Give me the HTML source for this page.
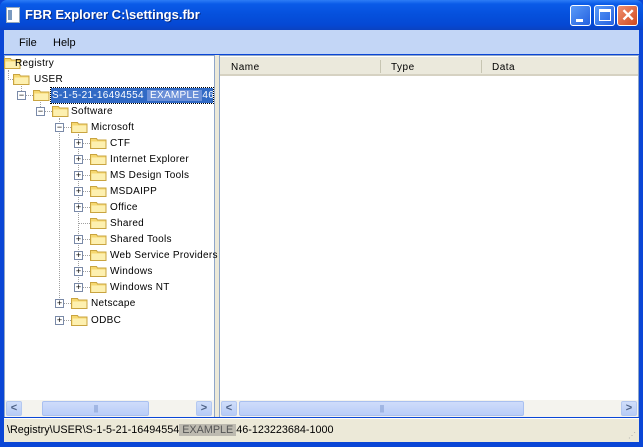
<!DOCTYPE html>
<html><head><meta charset="utf-8"><style>
*{margin:0;padding:0;box-sizing:border-box}
body{width:643px;height:447px;overflow:hidden;background:#0a46d6;font-family:"Liberation Sans",sans-serif;position:relative}
.a{position:absolute}
#title{left:0;top:0;width:643px;height:30px;background:linear-gradient(#2d7df6 0,#0a5be8 4px,#0550dc 15px,#0548d4 25px,#0a42c0 30px);border-radius:7px 7px 0 0}
#title .t{left:25px;top:7px;color:#fff;font-weight:bold;font-size:13px;letter-spacing:0;text-shadow:1px 1px #0a2a80}
.btn{top:5px;width:21px;height:21px;border:1px solid #fff;border-radius:3px;background:linear-gradient(135deg,#5a9af8,#2461e0)}
#menu{left:4px;top:30px;width:635px;height:24px;background:#c3d6f6;font-size:11px}
#menu span{position:absolute;top:7px}
#lp{left:4px;top:55px;width:211px;height:362px;background:#fff;border:1px solid #8fa6c8}
#split{left:215px;top:55px;width:4px;height:362px;background:#ece9d8}
#rp{left:219px;top:55px;width:420px;height:362px;background:#fff;border:1px solid #8fa6c8}
#hdr{left:0;top:1px;width:418px;height:19px;background:#ebe9dc;border-bottom:2px solid #d6d2c2;font-size:10px;letter-spacing:.5px;color:#000}
#hdr span{position:absolute;top:5px}
.sep{position:absolute;top:3px;width:1px;height:13px;background:#c7c5b2}
.row{position:absolute;font-size:10px;letter-spacing:.3px;color:#000;white-space:nowrap;line-height:12px}
.box{position:absolute;width:9px;height:9px;border:1px solid #7a8aa8;background:#fff;font-size:9px;line-height:7px;text-align:center;color:#000}
.fold{position:absolute;width:17px;height:12px}
.dv{position:absolute;border-left:1px dotted #a0a0a0;width:0}
.dh{position:absolute;border-top:1px dotted #a0a0a0;height:0}
.sb{height:17px;background:#f4f3ee}
.ab{position:absolute;top:1px;width:16px;height:15px;border-radius:2px;background:linear-gradient(#d0defa,#b6cbf6);border:1px solid #b4c8f0;color:#4d6185;font-size:11px;font-weight:bold;text-align:center;line-height:13px}
.th{position:absolute;top:1px;height:15px;border-radius:2px;background:linear-gradient(#cfdcfa,#b9cdf8);border:1px solid #a9c0f0;color:#8fa6d8;font-size:8px;text-align:center;line-height:13px;letter-spacing:-1px}
#status{left:4px;top:418px;width:635px;height:24px;background:#ece9d8;font-size:10.8px;border-top:1px solid #fff}
</style></head><body>
<div id="title" class="a">
 <div class="a" style="left:6px;top:7px;width:14px;height:16px;background:#fff;border:1px solid #9ab"></div>
 <div class="a" style="left:8px;top:10px;width:4px;height:10px;background:#7a9ac0"></div>
 <span class="a t">FBR Explorer C:\settings.fbr</span>
 <div class="a btn" style="left:570px"><div class="a" style="left:5px;top:13px;width:7px;height:3px;background:#fff"></div></div>
 <div class="a btn" style="left:594px"><div class="a" style="left:4px;top:3px;width:12px;height:12px;border:1px solid #fff;border-top-width:3px"></div></div>
 <div class="a btn" style="left:617px;background:linear-gradient(135deg,#f09070,#d04a20)"><span class="a" style="left:3px;top:0;color:#fff;font-size:17px;font-weight:bold;line-height:19px">✕</span></div>
</div>
<div id="menu" class="a"><span style="left:15px">File</span><span style="left:49px">Help</span></div>
<div id="lp" class="a">
<div class="sb a" style="left:0;top:344px;width:209px">
 <div class="ab" style="left:1px">&lt;</div>
 <div class="th" style="left:37px;width:107px">||||</div>
 <div class="ab" style="left:191px">&gt;</div>
</div>
</div>
<div id="split" class="a"></div>
<div id="rp" class="a">
 <div id="hdr" class="a"><span style="left:11px">Name</span><div class="sep" style="left:160px"></div><span style="left:171px">Type</span><div class="sep" style="left:261px"></div><span style="left:272px">Data</span></div>
 <div class="sb a" style="left:0;top:344px;width:418px">
  <div class="ab" style="left:1px">&lt;</div>
  <div class="th" style="left:19px;width:285px">||||</div>
  <div class="ab" style="left:401px">&gt;</div>
 </div>
</div>
<svg width="0" height="0" style="position:absolute"><defs>
<symbol id="f" viewBox="0 0 17 12"><path d="M0.5 1.5h6l1 1.5h8.5v8.5h-15.5z" fill="#f6d870" stroke="#c9a440"/><path d="M1.5 4.5h14v6.5h-14z" fill="#fdf0b0"/></symbol></defs></svg>
<div id="tree"></div>
<div id="status" class="a"><span class="a" style="left:3px;top:5px">\Registry\USER\S-1-5-21-16494554<span style="background:#bdbab0;color:#555"> EXAMPLE </span>46-123223684-1000</span>
<span class="a" style="right:3px;bottom:2px;color:#aaa;font-size:8px">⋰</span></div>
<script>
const rows=[
[63,-1,4,15,"Registry",0],[79,-1,13,34,"USER",0],[95,21,33,51,"S-1-5-21-16494554 EXAMPLE 46-",2],
[111,40,52,71,"Software",2],[127,59,71,91,"Microsoft",2],
[143,78,90,110,"CTF",1],[159,78,90,110,"Internet Explorer",1],[175,78,90,110,"MS Design Tools",1],
[191,78,90,110,"MSDAIPP",1],[207,78,90,110,"Office",1],[223,-1,90,110,"Shared",0],
[239,78,90,110,"Shared Tools",1],[255,78,90,110,"Web Service Providers",1],[271,78,90,110,"Windows",1],
[287,78,90,110,"Windows NT",1],[303,59,71,91,"Netscape",1],[320,59,71,91,"ODBC",1]];
let h='';
h+='<div class="dv" style="left:8px;top:70px;height:10px"></div>';
h+='<div class="dv" style="left:21px;top:86px;height:5px"></div>';
h+='<div class="dv" style="left:40px;top:102px;height:5px"></div>';
h+='<div class="dv" style="left:59px;top:118px;height:186px"></div>';
h+='<div class="dv" style="left:78px;top:134px;height:154px"></div>';
h+='<div class="dh" style="left:8px;top:79px;width:5px"></div>';
for(const [y,bx,fx,tx,t,k] of rows){
 if(bx>0){h+=`<div class="box" style="left:${bx-4}px;top:${y-4}px">${k==2?'−':'+'}</div><div class="dh" style="left:${bx+5}px;top:${y}px;width:${fx-bx-5}px"></div>`;}
 if(t=="Shared")h+=`<div class="dh" style="left:78px;top:${y}px;width:12px"></div>`;
 h+=`<svg class="fold" style="left:${fx}px;top:${y-6}px"><use href="#f"/></svg>`;
 if(t.startsWith("S-1"))h+=`<div class="row" style="left:${tx}px;top:${y-7}px;width:162px;height:15px;background:#316ac5;color:#fff;padding:2px 1px 1px;overflow:hidden;outline:1px dotted #000">S-1-5-21-16494554 <span style="background:#6a8fd8">&nbsp;EXAMPLE&nbsp;</span>46-</div>`;
 else h+=`<div class="row" style="left:${tx}px;top:${y-5}px">${t}</div>`;
}
document.getElementById('tree').innerHTML=h;
</script>
</body></html>
